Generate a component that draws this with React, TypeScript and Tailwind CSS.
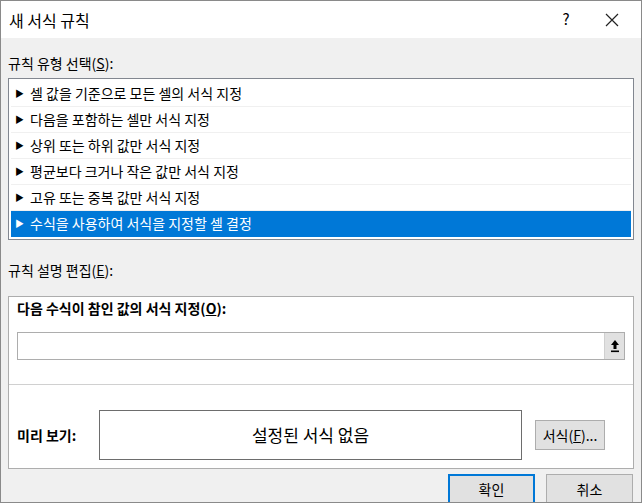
const FONT = { fontFamily: '"Malgun Gothic", "Noto Sans CJK KR", "Noto Sans", sans-serif' };

const RULES = [
  "셀 값을 기준으로 모든 셀의 서식 지정",
  "다음을 포함하는 셀만 서식 지정",
  "상위 또는 하위 값만 서식 지정",
  "평균보다 크거나 작은 값만 서식 지정",
  "고유 또는 중복 값만 서식 지정",
  "수식을 사용하여 서식을 지정할 셀 결정",
];

export default function App() {
  const selected = 5;
  return (
    <div style={FONT} className="w-[642px] h-[503px] bg-[#f0f0f0] border border-[#8a8a8a] text-[14px] text-black flex flex-col overflow-hidden">
      {/* 제목 표시줄 */}
      <div className="h-[37px] bg-white flex items-center pl-[8px] shrink-0">
        <span className="text-[16px]">새 서식 규칙</span>
        <span className="ml-auto w-[46px] text-center text-[15px]">?</span>
        <span className="w-[46px] mr-[6px] flex justify-center">
          <svg width="14" height="14" viewBox="0 0 14 14"><path d="M1 1L13 13M13 1L1 13" stroke="#222" strokeWidth="1.2" /></svg>
        </span>
      </div>

      <div className="px-[7px] flex flex-col">
        <div className="mt-[15px] h-[20px] leading-[20px]">규칙 유형 선택(<u>S</u>):</div>
        <div className="mt-[5px] h-[162px] bg-white border border-[#828790] p-[2px] flex flex-col">
          {RULES.map((r, i) => (
            <div
              key={r}
              className={`h-[26px] flex items-center gap-[6px] pl-[4px] border-b ${i === selected ? "bg-[#0078d7] text-white border-transparent" : "border-[#f0f0f0]"}`}
            >
              <span className="text-[9px]">▶</span>
              <span>{r}</span>
            </div>
          ))}
        </div>

        <div className="mt-[20px] h-[20px] leading-[20px]">규칙 설명 편집(<u>E</u>):</div>
        <div className="mt-[16px] h-[173px] bg-white border border-[#adadad] flex flex-col">
          <div className="mt-[1px] ml-[8px] font-bold h-[20px] leading-[20px]">다음 수식이 참인 값의 서식 지정(<u>O</u>):</div>
          <div className="mt-[14px] mx-[8px] h-[28px] border border-[#adadad] flex shrink-0">
            <div className="flex-1" />
            <div className="w-[20px] bg-[#e1e1e1] flex items-center justify-center border-l border-[#d0d0d0]">
              <svg width="10" height="14" viewBox="0 0 10 14"><path d="M5 1L1 6H3.5V10H6.5V6H9Z" fill="#000" /><rect x="1" y="11.5" width="8" height="1.6" fill="#000" /></svg>
            </div>
          </div>
          <div className="mt-[24px] h-px bg-[#d0d0d0] shrink-0" />
          <div className="flex items-center mt-[25px] pl-[8px]">
            <span className="font-bold w-[82px]">미리 보기:</span>
            <div className="w-[423px] h-[50px] border border-[#6d6d6d] flex items-center justify-center text-[17px]">설정된 서식 없음</div>
            <button className="ml-[13px] w-[70px] h-[30px] bg-[#e1e1e1] border border-[#adadad]">서식(<u>F</u>)...</button>
          </div>
        </div>

        <div className="mt-[5px] flex justify-end gap-[11px] mr-[1px]">
          <button className="w-[87px] h-[31px] bg-[#e1e1e1] border-2 border-[#0078d7]">확인</button>
          <button className="w-[87px] h-[31px] bg-[#e1e1e1] border border-[#adadad]">취소</button>
        </div>
      </div>
    </div>
  );
}
